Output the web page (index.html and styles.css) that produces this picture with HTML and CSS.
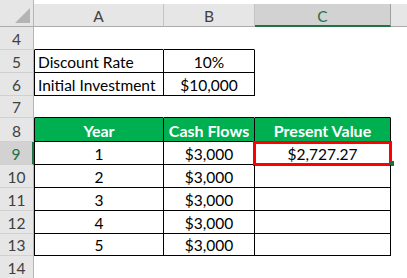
FILE: index.html
```html
<!DOCTYPE html>
<html>
<head>
<meta charset="utf-8">
<link rel="stylesheet" href="styles.css">
</head>
<body>
<div class="sheet">
  <div class="corner"><span class="tri"></span></div>
  <div class="ch">A</div>
  <div class="ch">B</div>
  <div class="ch ch-sel">C</div>
  <div class="ch ch-rest"></div>

  <div class="rh">4</div>
  <div class="c ca bb"></div>
  <div class="c bb"></div>
  <div class="c"></div>
  <div class="c rest"></div>

  <div class="rh">5</div>
  <div class="c ca bl br bb left">Discount Rate</div>
  <div class="c br bb">10%</div>
  <div class="c"></div>
  <div class="c rest"></div>

  <div class="rh">6</div>
  <div class="c ca bl br bb left">Initial Investment</div>
  <div class="c br bb">$10,000</div>
  <div class="c"></div>
  <div class="c rest"></div>

  <div class="rh">7</div>
  <div class="c ca bb"></div>
  <div class="c bb"></div>
  <div class="c bb"></div>
  <div class="c rest"></div>

  <div class="rh">8</div>
  <div class="c ca bl br bb hd">Year</div>
  <div class="c br bb hd">Cash Flows</div>
  <div class="c br bb hd">Present Value</div>
  <div class="c rest"></div>

  <div class="rh rh-sel">9</div>
  <div class="c ca bl br bb">1</div>
  <div class="c br bb">$3,000</div>
  <div class="c br bb active">$2,727.27<span class="sel"></span><span class="handle"></span></div>
  <div class="c rest"></div>

  <div class="rh">10</div>
  <div class="c ca bl br bb">2</div>
  <div class="c br bb">$3,000</div>
  <div class="c br bb"></div>
  <div class="c rest"></div>

  <div class="rh">11</div>
  <div class="c ca bl br bb">3</div>
  <div class="c br bb">$3,000</div>
  <div class="c br bb"></div>
  <div class="c rest"></div>

  <div class="rh">12</div>
  <div class="c ca bl br bb">4</div>
  <div class="c br bb">$3,000</div>
  <div class="c br bb"></div>
  <div class="c rest"></div>

  <div class="rh">13</div>
  <div class="c ca bl br bb">5</div>
  <div class="c br bb">$3,000</div>
  <div class="c br bb"></div>
  <div class="c rest"></div>

  <div class="rh">14</div>
  <div class="c ca"></div>
  <div class="c"></div>
  <div class="c"></div>
  <div class="c rest"></div>
</div>
</body>
</html>
```

FILE: styles.css
```css
html, body {
  margin: 0;
  padding: 0;
  background: #ffffff;
}

body {
  font-family: Lato, "Liberation Sans", sans-serif;
  font-size: 15.5px;
  color: #000000;
  overflow: hidden;
}

.sheet {
  display: grid;
  grid-template-columns: 34px 130px 91px 136px 1fr;
  grid-template-rows: 27px 23px 23px 23px 22px 24px 23px 23px 23px 23px 22px 23px;
  width: 407px;
  height: 278px;
  overflow: hidden;
}

.corner {
  position: relative;
  background: #e6e6e6;
  border-right: 1px solid #b5b5b5;
  border-bottom: 1px solid #ababab;
}

.tri {
  position: absolute;
  left: 15px;
  top: 8px;
  width: 0;
  height: 0;
  border-left: 15px solid transparent;
  border-bottom: 15px solid #b4b4b4;
}

.ch {
  margin-top: 4px;
  background: #e6e6e6;
  border-right: 1px solid #c4c4c4;
  border-bottom: 1px solid #ababab;
  color: #404040;
  display: flex;
  align-items: flex-end;
  justify-content: center;
  line-height: 18px;
  padding-bottom: 1px;
}

.ch-sel {
  background: #d2d2d2;
  color: #217346;
  border-right-color: #9f9f9f;
  border-bottom: 2px solid #217346;
  padding-bottom: 0;
}

.ch-rest {
  border-right: none;
}

.rh {
  background: #e6e6e6;
  border-right: 1px solid #b5b5b5;
  border-bottom: 1px solid #d0d0d0;
  color: #404040;
  display: flex;
  align-items: flex-end;
  justify-content: center;
  line-height: 18px;
  padding-bottom: 1px;
}

.rh-sel {
  background: #d2d2d2;
  color: #217346;
  border-right: 2px solid #217346;
}

.c {
  position: relative;
  border-right: 1px solid transparent;
  border-bottom: 1px solid transparent;
  display: flex;
  align-items: flex-end;
  justify-content: center;
  line-height: 18px;
  padding-bottom: 1px;
  white-space: nowrap;
}

.ca {
  border-left: 1px solid transparent;
}

.rest {
  border: none;
}

.bl { border-left-color: #000000; }
.br { border-right-color: #000000; }
.bb { border-bottom-color: #000000; }

.left {
  justify-content: flex-start;
  padding-left: 3px;
}

.hd {
  background: #00b050;
  color: #ffffff;
  font-weight: bold;
  font-size: 16px;
}

.sel {
  position: absolute;
  left: -2px;
  top: -1px;
  width: 139px;
  height: 25px;
  box-sizing: border-box;
  border: 3px solid #ff0000;
}

.handle {
  position: absolute;
  left: 135px;
  top: 19px;
  width: 4px;
  height: 5px;
  background: #1e6b3f;
}
```
